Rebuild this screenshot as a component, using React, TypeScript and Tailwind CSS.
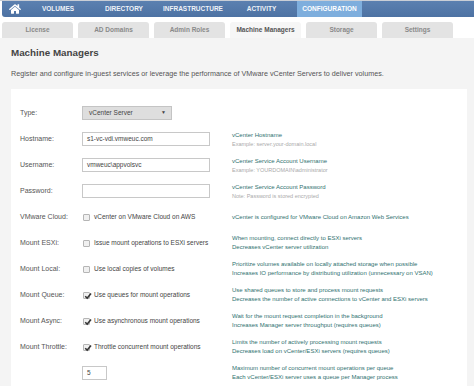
import React from "react";
import { FaHome } from "react-icons/fa";

function Check({ checked }: { checked?: boolean }) {
  return (
    <span className="relative inline-flex h-[7px] w-[7px] shrink-0 items-center justify-center rounded-[1px] border border-[#b5b5b5] bg-[#f0f0f0]">
      {checked && (
        <svg viewBox="0 0 10 10" className="absolute left-[0px] top-[-1px] h-[8px] w-[8px]">
          <path d="M1.5 5.2 L4 7.6 L8.8 1.8" fill="none" stroke="#333" strokeWidth="1.8" />
        </svg>
      )}
    </span>
  );
}

function Row({
  label,
  field,
  desc,
  example,
  desc2,
}: {
  label: string;
  field: React.ReactNode;
  desc?: string;
  example?: string;
  desc2?: string;
}) {
  return (
    <div className="flex h-[26px] items-center">
      <div className="w-[62px] shrink-0 text-[7px] text-[#555]">{label}</div>
      <div className="flex w-[150px] shrink-0 items-center">{field}</div>
      <div className="flex flex-col leading-[9px]">
        {desc && <span className="text-[6px] text-[#2f7270]">{desc}</span>}
        {desc2 && <span className="text-[6px] text-[#2f7270]">{desc2}</span>}
        {example && <span className="text-[5.5px] leading-[8px] text-[#aaa]">{example}</span>}
      </div>
    </div>
  );
}

function TextInput({ value }: { value?: string }) {
  return (
    <div className="flex h-[14px] w-[128px] items-center border border-[#c8c8c8] bg-white pl-[4px] text-[6.5px] text-[#444]">
      {value}
    </div>
  );
}

function CheckField({ checked, text }: { checked?: boolean; text: string }) {
  return (
    <div className="flex items-center gap-[4px] pl-[1px] text-[6.5px] text-[#444]">
      <Check checked={checked} />
      <span>{text}</span>
    </div>
  );
}

const navItems = [
  { t: "VOLUMES", w: "w-[60px]" },
  { t: "DIRECTORY", w: "w-[72px]" },
  { t: "INFRASTRUCTURE", w: "w-[66px]" },
  { t: "ACTIVITY", w: "w-[71px]" },
];

const tabs = ["License", "AD Domains", "Admin Roles", "Machine Managers", "Storage", "Settings"];

export default function App() {
  return (
    <div className="h-[386px] w-[474px] overflow-hidden bg-white font-['Liberation_Sans',Arial,sans-serif]">
      {/* top nav */}
      <div className="border-t border-[#c9ced6]">
        <div className="ml-[2px] flex h-[16px] items-stretch rounded-bl-[3px] bg-gradient-to-b from-[#5b80b0] to-[#4d72a3] text-[6.5px] font-bold text-[#eef2f8]">
          <div className="flex w-[26px] items-center justify-center">
            <FaHome className="h-[12px] w-[12px] text-white" />
          </div>
          {navItems.map((n) => (
            <div key={n.t} className={`${n.w} flex items-center justify-center`}>
              {n.t}
            </div>
          ))}
          <div className="flex w-[65px] items-center justify-center bg-[#7eaedd] text-white">CONFIGURATION</div>
        </div>
      </div>

      {/* tabs */}
      <div className="mt-[5px] flex gap-[5px] pl-[2px]">
        {tabs.map((t) => (
          <div
            key={t}
            className={`flex h-[16px] w-[71px] items-center justify-center rounded-t-[3px] text-[6.5px] font-bold ${
              t === "Machine Managers" ? "bg-[#f6f6f6] text-[#555]" : "bg-[#e3e3e3] text-[#8a8a8a]"
            }`}
          >
            {t}
          </div>
        ))}
      </div>

      {/* content */}
      <div className="h-full bg-[#f4f4f4] pl-[11px] pr-[7px] pt-[8px]">
        <div className="text-[9.8px] font-bold leading-[14px] text-[#444]">Machine Managers</div>
        <div className="mt-[9px] text-[7.2px] leading-[10px] text-[#555]">
          Register and configure in-guest services or leverage the performance of VMware vCenter Servers to deliver volumes.
        </div>
        <div className="mt-[10px] h-full bg-white pl-[9px] pt-[11px]">
          <Row
            label="Type:"
            field={
              <div className="flex h-[14px] w-[90px] items-center justify-between border border-[#c4c4c4] bg-[#dedede] pl-[6px] pr-[5px] text-[6.5px] text-[#444]">
                <span>vCenter Server</span>
                <span className="text-[5px]">▼</span>
              </div>
            }
          />
          <Row
            label="Hostname:"
            field={<TextInput value="s1-vc-vdi.vmweuc.com" />}
            desc="vCenter Hostname"
            example="Example: server.your-domain.local"
          />
          <Row
            label="Username:"
            field={<TextInput value="vmweuc\appvolsvc" />}
            desc="vCenter Service Account Username"
            example="Example: YOURDOMAIN\administrator"
          />
          <Row
            label="Password:"
            field={<TextInput />}
            desc="vCenter Service Account Password"
            example="Note: Password is stored encrypted"
          />
          <Row
            label="VMware Cloud:"
            field={<CheckField text="vCenter on VMware Cloud on AWS" />}
            desc="vCenter is configured for VMware Cloud on Amazon Web Services"
          />
          <Row
            label="Mount ESXi:"
            field={<CheckField text="Issue mount operations to ESXi servers" />}
            desc="When mounting, connect directly to ESXi servers"
            desc2="Decreases vCenter server utilization"
          />
          <Row
            label="Mount Local:"
            field={<CheckField text="Use local copies of volumes" />}
            desc="Prioritize volumes available on locally attached storage when possible"
            desc2="Increases IO performance by distributing utilization (unnecessary on VSAN)"
          />
          <Row
            label="Mount Queue:"
            field={<CheckField checked text="Use queues for mount operations" />}
            desc="Use shared queues to store and process mount requests"
            desc2="Decreases the number of active connections to vCenter and ESXi servers"
          />
          <Row
            label="Mount Async:"
            field={<CheckField checked text="Use asynchronous mount operations" />}
            desc="Wait for the mount request completion in the background"
            desc2="Increases Manager server throughput (requires queues)"
          />
          <Row
            label="Mount Throttle:"
            field={<CheckField checked text="Throttle concurrent mount operations" />}
            desc="Limits the number of actively processing mount requests"
            desc2="Decreases load on vCenter/ESXi servers (requires queues)"
          />
          <Row
            label=""
            field={
              <div className="flex h-[14px] w-[25px] items-center border border-[#c8c8c8] bg-white pl-[4px] text-[6.5px] text-[#444]">
                5
              </div>
            }
            desc="Maximum number of concurrent mount operations per queue"
            desc2="Each vCenter/ESXi server uses a queue per Manager process"
          />
        </div>
      </div>
    </div>
  );
}
